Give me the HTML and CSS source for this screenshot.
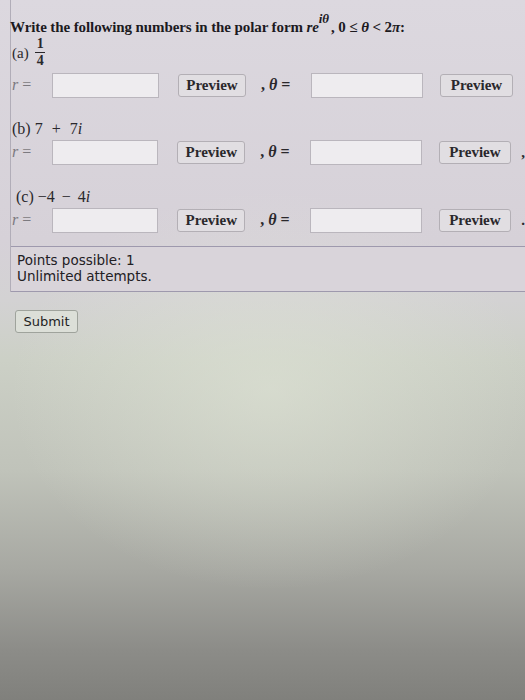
FILE: index.html
```html
<!DOCTYPE html>
<html>
<head>
<meta charset="utf-8">
<link rel="stylesheet" href="styles.css">
</head>
<body>
<div class="screen">
  <div class="question">
    <div class="title">Write the following numbers in the polar form <span class="m">r</span><span class="m">e</span><sup class="m">iθ</sup><span class="sp">, 0 ≤ <span class="m">θ</span> &lt; 2<span class="m">π</span>:</span></div>

    <div class="part part-a">(a) <span class="frac"><span>1</span><span class="bar"></span><span>4</span></span></div>
    <div class="row row-a">
      <span class="rlab"><span class="m">r</span> =</span>
      <span class="inp"></span>
      <span class="btn">Preview</span>
      <span class="tlab">, <span class="m">θ</span> =</span>
      <span class="inp inp2"></span>
      <span class="btn btn2">Preview</span>
    </div>

    <div class="part part-b">(b) <span class="t1">7</span><span class="op">+</span><span>7<span class="m">i</span></span></div>
    <div class="row">
      <span class="rlab"><span class="m">r</span> =</span>
      <span class="inp"></span>
      <span class="btn">Preview</span>
      <span class="tlab">, <span class="m">θ</span> =</span>
      <span class="inp inp2"></span>
      <span class="btn btn2">Preview</span>
      <span class="punct">,</span>
    </div>

    <div class="part part-c">(c) <span class="t1">−4</span><span class="op">−</span><span>4<span class="m">i</span></span></div>
    <div class="row">
      <span class="rlab"><span class="m">r</span> =</span>
      <span class="inp"></span>
      <span class="btn">Preview</span>
      <span class="tlab">, <span class="m">θ</span> =</span>
      <span class="inp inp2"></span>
      <span class="btn btn2">Preview</span>
      <span class="punct">.</span>
    </div>

    <div class="points">
      <div>Points possible: 1</div>
      <div>Unlimited attempts.</div>
    </div>
  </div>
  <div class="actions">
    <span class="submit">Submit</span>
  </div>
</div>
</body>
</html>
```

FILE: styles.css
```css
html, body {
  margin: 0;
  padding: 0;
}
body {
  width: 525px;
  height: 700px;
  overflow: hidden;
  background:
    radial-gradient(ellipse 260px 200px at 270px 390px, rgba(225,230,215,0.55), rgba(225,230,215,0) 100%),
    linear-gradient(to bottom, #dcd8df 0px, #d6d1d8 240px, #d3d2d3 300px, #ccd0c6 360px, #c0c3ba 470px, #a7a8a2 570px, #8c8c88 650px, #80807c 700px);
}
.screen {
  padding: 0 0 0 10px;
}
.question {
  border-left: 1px solid #b1adb8;
  padding-top: 17px;
}
.title {
  font-family: "Liberation Serif", "Times New Roman", serif;
  font-size: 15px;
  line-height: 20px;
  color: #1c1a1e;
  font-weight: bold;
  letter-spacing: -0.1px;
  margin-left: -1px;
}
.m {
  font-style: italic;
}
.title sup {
  font-size: 13px;
  vertical-align: 9px;
  line-height: 0;
  font-weight: bold;
}
.sp {
  margin-left: 2px;
}
.part {
  font-family: "Liberation Serif", "Times New Roman", serif;
  font-size: 16px;
  line-height: 20px;
  color: #2a282c;
  padding-left: 1px;
  height: 20px;
  display: flex;
  align-items: center;
}
.part-a {
  gap: 6px;
  height: 31px;
  margin-top: 0;
  font-size: 15px;
}
.part-b {
  margin-top: 21px;
}
.part-c {
  margin-top: 22px;
  padding-left: 5px;
}
.t1 {
  margin-left: 4px;
}
.op {
  margin: 0 9px;
}
.part-c .op {
  margin: 0 7px;
}
.frac {
  display: inline-flex;
  flex-direction: column;
  align-items: center;
  font-size: 14px;
  line-height: 14px;
  font-weight: bold;
  width: 11px;
}
.frac .bar {
  display: block;
  width: 10px;
  height: 1px;
  background: #2a282c;
  margin: 1px 0;
}
.row {
  display: flex;
  align-items: center;
  height: 26px;
  font-family: "Liberation Serif", "Times New Roman", serif;
  font-size: 15px;
  color: #2a282c;
}
.row-a {
  margin-top: 4px;
}
.rlab {
  width: 40px;
  color: #7c7a80;
  padding-left: 1px;
  font-size: 16px;
}
.inp {
  width: 105px;
  height: 23px;
  background: #eeecef;
  border: 1px solid #bab6bd;
  box-sizing: content-box;
}
.btn {
  margin-left: 19px;
  width: 66px;
  height: 21px;
  background: #e1dee2;
  border: 1px solid #b3afb5;
  border-radius: 3px;
  display: flex;
  align-items: center;
  justify-content: center;
  font-size: 15px;
  font-weight: bold;
  color: #2a282c;
}
.tlab {
  margin-left: 15px;
  width: 50px;
  font-weight: bold;
  font-size: 16px;
}
.inp2 {
  width: 110px;
}
.btn2 {
  margin-left: 17px;
  width: 71px;
}
.punct {
  margin-left: 10px;
  font-weight: bold;
}
.points {
  margin-top: 13px;
  border-top: 1px solid #9e99ad;
  border-bottom: 1px solid #9e99ad;
  background: #d9d4da;
  padding: 5px 0 7px 6px;
  font-family: "DejaVu Sans", Verdana, sans-serif;
  font-size: 13.5px;
  line-height: 16px;
  color: #222024;
}
.actions {
  padding: 18px 0 0 5px;
}
.submit {
  display: inline-flex;
  align-items: center;
  justify-content: center;
  width: 61px;
  height: 21px;
  border: 1px solid #9fa39c;
  border-radius: 3px;
  background: #dcdfd8;
  font-family: "DejaVu Sans", Verdana, sans-serif;
  font-size: 13px;
  color: #1e1e1e;
}
```
